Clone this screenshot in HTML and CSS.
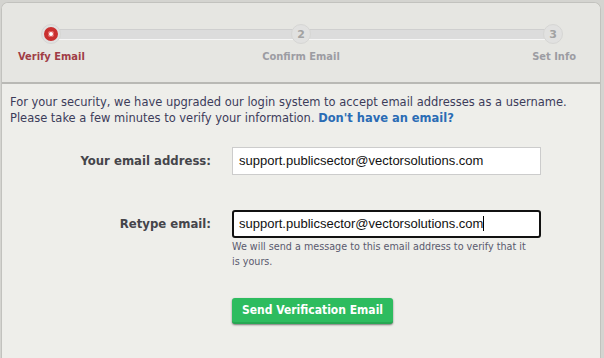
FILE: index.html
```html
<!DOCTYPE html>
<html>
<head>
<meta charset="utf-8">
<link rel="stylesheet" href="styles.css">
</head>
<body>
<div class="panel">
  <div class="steps">
    <div class="track"></div>
    <div class="step step-1 active">
      <div class="dot"><span class="ring"></span></div>
      <div class="label">Verify Email</div>
    </div>
    <div class="step step-2">
      <div class="dot">2</div>
      <div class="label">Confirm Email</div>
    </div>
    <div class="step step-3">
      <div class="dot">3</div>
      <div class="label">Set Info</div>
    </div>
  </div>
  <div class="content">
    <p class="intro">For your security, we have upgraded our login system to accept email addresses as a username.<br>Please take a few minutes to verify your information. <a href="#" class="link">Don't have an email?</a></p>
    <div class="row row-first">
      <label class="field-label">Your email address:</label>
      <div class="field">
        <div class="input">support.publicsector@vectorsolutions.com</div>
      </div>
    </div>
    <div class="row row-second">
      <label class="field-label">Retype email:</label>
      <div class="field">
        <div class="input focused">support.publicsector@vectorsolutions.com<span class="caret"></span></div>
        <div class="help">We will send a message to this email address to verify that it is yours.</div>
      </div>
    </div>
    <div class="row row-btn">
      <div class="spacer"></div>
      <div class="field">
        <button class="btn">Send Verification Email</button>
      </div>
    </div>
  </div>
</div>
</body>
</html>
```
FILE: styles.css
```css
html, body {
  margin: 0;
  padding: 0;
}
body {
  background: #d4d4d0;
  font-family: "DejaVu Sans Condensed", "DejaVu Sans", sans-serif;
  width: 604px;
  height: 358px;
  overflow: hidden;
}
.panel {
  margin: 2px 0 0 1px;
  width: 598px;
  height: 356px;
  border: 1px solid #c2c2be;
  border-bottom: none;
  border-radius: 7px 7px 0 0;
  background: #eeeeea;
  overflow: hidden;
}
.steps {
  position: relative;
  height: 79px;
  background: #e6e6e2;
  border-bottom: 2px solid #b9b9b5;
}
.track {
  position: absolute;
  left: 48px;
  right: 48px;
  top: 26px;
  height: 9px;
  background: #dcdcdc;
  border-top: 1px solid #cfcfcf;
  border-bottom: 1px solid #f6f6f6;
}
.step {
  position: absolute;
  top: 21px;
  display: flex;
  flex-direction: column;
  align-items: center;
}
.step-1 { left: 16px; align-items: flex-start; }
.step-2 { left: 249px; width: 100px; }
.step-3 { right: 24px; align-items: flex-end; }
.dot {
  width: 20px;
  height: 20px;
  border-radius: 50%;
  background: #e1e1e0;
  border: 1px solid #d6d6d4;
  box-sizing: border-box;
  color: #a2a2a2;
  font-family: "DejaVu Sans", sans-serif;
  font-size: 11px;
  font-weight: bold;
  display: flex;
  align-items: center;
  justify-content: center;
}
.step-1 .dot { margin-left: 23px; }
.step-3 .dot { margin-right: 13px; }
.ring {
  width: 14px;
  height: 14px;
  border-radius: 50%;
  box-sizing: border-box;
  border: 4px solid #c9302f;
  background: #fff;
  box-shadow: inset 0 0 0 1px #e45555;
}
.label {
  margin-top: 6px;
  font-size: 11px;
  font-weight: bold;
  color: #9c9ca2;
  white-space: nowrap;
}
.step-1 .label { color: #a03d46; }
.content {
  padding: 10px 8px 0 8px;
}
.intro {
  margin: 0;
  font-size: 12.75px;
  line-height: 16px;
  color: #3c3c5a;
}
.link {
  color: #2a6cb5;
  font-weight: bold;
  text-decoration: none;
}
.row {
  display: flex;
  align-items: flex-start;
}
.row-first { margin-top: 21px; }
.row-second { margin-top: 35px; }
.row-btn { margin-top: 29px; }
.field-label, .spacer {
  width: 201px;
  flex: none;
  text-align: right;
  font-size: 13px;
  font-weight: bold;
  color: #45454a;
  padding-top: 6px;
  margin-right: 21px;
}
.field {
  width: 309px;
}
.input {
  height: 28px;
  box-sizing: border-box;
  border: 1px solid #cccccc;
  background: #fff;
  font-family: "Liberation Sans", Arial, sans-serif;
  font-size: 13px;
  color: #111;
  padding: 0 6px;
  line-height: 26px;
  white-space: nowrap;
}
.input.focused {
  border: 2px solid #111;
  border-radius: 3px;
  padding: 0 5px;
  line-height: 24px;
}
.caret {
  display: inline-block;
  width: 1px;
  height: 15px;
  background: #000;
  vertical-align: -3px;
}
.help {
  margin-top: 1px;
  font-size: 10.7px;
  line-height: 15px;
  color: #5a5a6e;
  width: 300px;
}
.btn {
  height: 26px;
  padding: 0 10px;
  border: none;
  border-radius: 3px;
  background: #2dbc5f;
  border-bottom: 2px solid #27a853;
  box-shadow: 0 1px 2px rgba(0,0,0,0.5);
  color: #fff;
  font-family: "DejaVu Sans Condensed", "DejaVu Sans", sans-serif;
  font-weight: bold;
  font-size: 12px;
}
```
